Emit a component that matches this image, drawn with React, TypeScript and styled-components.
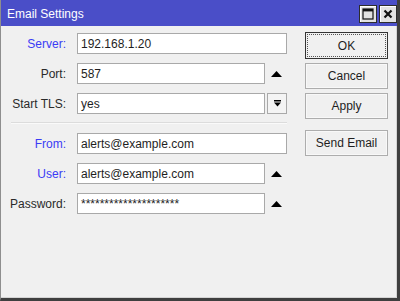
import styled, { createGlobalStyle } from "styled-components";

const GlobalStyle = createGlobalStyle`
  html, body {
    margin: 0;
    padding: 0;
    background: #f0f0f0;
  }
  body {
    font-family: "Liberation Sans", Arial, sans-serif;
    font-size: 12px;
    color: #222;
  }
`;

type Row = {
  label: string;
  value: string;
  blue?: boolean;
  extra?: "arrow" | "dropdown";
};

const topRows: Row[] = [
  { label: "Server:", value: "192.168.1.20", blue: true },
  { label: "Port:", value: "587", extra: "arrow" },
  { label: "Start TLS:", value: "yes", extra: "dropdown" },
];

const bottomRows: Row[] = [
  { label: "From:", value: "alerts@example.com", blue: true },
  { label: "User:", value: "alerts@example.com", blue: true, extra: "arrow" },
  { label: "Password:", value: "*********************", extra: "arrow" },
];

function FieldRow({ row }: { row: Row }) {
  return (
    <RowBox>
      <Label $blue={row.blue}>{row.label}</Label>
      <Input>{row.value}</Input>
      {row.extra === "arrow" && (
        <ArrowCell>
          <svg width="11" height="6" viewBox="0 0 11 6">
            <path d="M5.5 0 L11 6 L0 6 Z" fill="#000" />
          </svg>
        </ArrowCell>
      )}
      {row.extra === "dropdown" && (
        <DropButton>
          <svg width="7" height="7" viewBox="0 0 7 7">
            <rect x="0" y="0" width="7" height="1.5" fill="#000" />
            <path d="M0 2.5 L7 2.5 L3.5 6.5 Z" fill="#000" />
          </svg>
        </DropButton>
      )}
    </RowBox>
  );
}

export default function App() {
  return (
    <>
      <GlobalStyle />
      <Window>
        <TitleBar>
          <Title>Email Settings</Title>
          <TitleButtons>
            <TitleButton>
              <svg width="12" height="12" viewBox="0 0 12 12">
                <rect x="1" y="1" width="10" height="10" fill="none" stroke="#111" strokeWidth="1.2" />
                <rect x="1" y="1" width="10" height="2.4" fill="#111" />
              </svg>
            </TitleButton>
            <TitleButton>
              <svg width="12" height="12" viewBox="0 0 12 12">
                <path d="M2.5 2.5 L9.5 9.5 M9.5 2.5 L2.5 9.5" stroke="#111" strokeWidth="2.2" />
              </svg>
            </TitleButton>
          </TitleButtons>
        </TitleBar>
        <Body>
          <Form>
            {topRows.map((r) => (
              <FieldRow key={r.label} row={r} />
            ))}
            <Separator />
            {bottomRows.map((r) => (
              <FieldRow key={r.label} row={r} />
            ))}
          </Form>
          <Buttons>
            <Button $focused>OK</Button>
            <Button>Cancel</Button>
            <Button>Apply</Button>
            <Button $spaced>Send Email</Button>
          </Buttons>
        </Body>
      </Window>
    </>
  );
}

const Window = styled.div`
  width: 400px;
  height: 301px;
  box-sizing: border-box;
  display: flex;
  flex-direction: column;
  background: #f0f0f0;
  border-left: 1px solid #8e8e8e;
  border-right: 3px solid #3f3f3f;
  border-bottom: 3px solid #3f3f3f;
`;

const TitleBar = styled.div`
  height: 26px;
  flex: none;
  display: flex;
  align-items: center;
  justify-content: space-between;
  background: #4a4ec8;
  padding: 0 0 0 6px;
`;

const Title = styled.div`
  color: #fff;
  font-size: 12px;
  margin-top: 1px;
`;

const TitleButtons = styled.div`
  display: flex;
  gap: 2px;
  margin-top: 1px;
`;

const TitleButton = styled.div`
  width: 18px;
  height: 18px;
  box-sizing: border-box;
  display: flex;
  align-items: center;
  justify-content: center;
  background: #e2e2e2;
  border: 1px solid #2c2c2c;
  box-shadow: inset 1px 1px #ffffff;
`;

const Body = styled.div`
  flex: 1;
  display: flex;
  align-items: flex-start;
  border-right: 1px solid #d4d4d4;
  border-bottom: 1px solid #d4d4d4;
  padding-top: 6px;
`;

const Form = styled.div`
  width: 286px;
  margin-top: 1px;
  display: flex;
  flex-direction: column;
  gap: 9px;
`;

const RowBox = styled.div`
  display: flex;
  align-items: center;
  height: 21px;
`;

const Label = styled.div<{ $blue?: boolean }>`
  width: 65px;
  flex: none;
  text-align: right;
  margin-right: 11px;
  color: ${(p) => (p.$blue ? "#3b3bf5" : "#2a2a2a")};
`;

const Input = styled.div`
  flex: 1;
  height: 21px;
  box-sizing: border-box;
  background: #fff;
  border: 1px solid #a9a9a9;
  padding: 0 3px;
  display: flex;
  align-items: center;
  color: #1e1e1e;
  white-space: nowrap;
  overflow: hidden;
`;

const ArrowCell = styled.div`
  width: 21px;
  flex: none;
  display: flex;
  align-items: center;
  justify-content: center;
  padding-left: 1px;
`;

const DropButton = styled.div`
  width: 20px;
  height: 21px;
  flex: none;
  margin-left: 2px;
  box-sizing: border-box;
  border: 1px solid #a9a9a9;
  background: #f4f4f4;
  display: flex;
  align-items: center;
  justify-content: center;
`;

const Separator = styled.div`
  height: 1px;
  margin-left: 10px;
  background: #dcdcdc;
  border-bottom: 1px solid #fafafa;
  margin-top: -1px;
`;

const Buttons = styled.div`
  margin-left: 18px;
  width: 83px;
  display: flex;
  flex-direction: column;
  gap: 4px;
`;

const Button = styled.div<{ $focused?: boolean; $spaced?: boolean }>`
  height: ${(p) => (p.$focused ? "27px" : "26px")};
  box-sizing: border-box;
  display: flex;
  align-items: center;
  justify-content: center;
  background: #f0f0f0;
  color: #1e1e1e;
  font-size: 12px;
  margin-top: ${(p) => (p.$spaced ? "7px" : "0")};
  border: 1px solid ${(p) => (p.$focused ? "#333" : "#adadad")};
  outline: ${(p) => (p.$focused ? "1px dotted #555" : "none")};
  outline-offset: -3px;
  box-shadow: ${(p) => (p.$focused ? "none" : "inset 0 0 0 1px #f8f8f8")};
`;
